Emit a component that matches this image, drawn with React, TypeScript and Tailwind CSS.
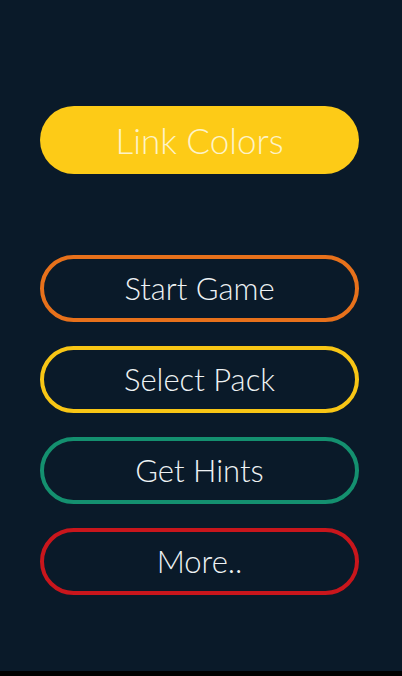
const menu = [
  { label: 'Start Game', border: 'border-[#e7711b]' },
  { label: 'Select Pack', border: 'border-[#f8c615]' },
  { label: 'Get Hints', border: 'border-[#14906f]' },
  { label: 'More..', border: 'border-[#c9161c]' },
];

export default function App() {
  return (
    <div
      className="w-[402px] h-[676px] flex flex-col bg-black"
      style={{ fontFamily: 'Lato, "Open Sans", sans-serif' }}
    >
      <div className="flex-1 bg-[#0a1a29] flex flex-col pl-10 pt-[106px]">
        <div className="w-[319px] h-[68px] rounded-full bg-[#fdcb17] flex items-center justify-center">
          <span className="text-[35px] font-light text-[#fdf3c8]">Link Colors</span>
        </div>

        <div className="w-[319px] mt-[81px] flex flex-col gap-6">
          {menu.map(item => (
            <button
              key={item.label}
              className={`h-[67px] rounded-full border-4 ${item.border} flex items-center justify-center`}
            >
              <span className="text-[31px] font-light text-[#eef2f4]">{item.label}</span>
            </button>
          ))}
        </div>
      </div>
      <div className="h-[5px] bg-black" />
    </div>
  );
}
